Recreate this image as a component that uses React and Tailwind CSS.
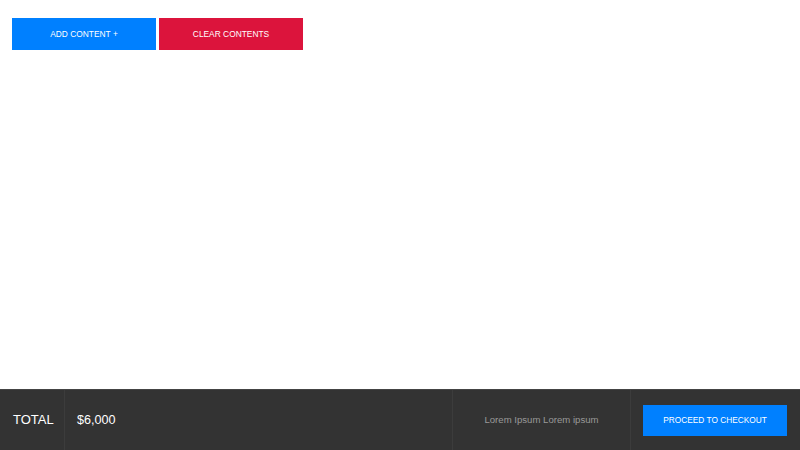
export default function App() {
  return (
    <div className="w-[800px] h-[450px] bg-white flex flex-col" style={{ fontFamily: '"Liberation Sans", Arial, sans-serif' }}>
      <div className="flex-1 pt-[18px] pl-[12px] flex gap-[3px] items-start">
        <button className="w-[144px] h-[32px] pt-[1px] bg-[#0080ff] text-white text-[8.4px] uppercase">ADD CONTENT +</button>
        <button className="w-[144px] h-[32px] pt-[1px] bg-[#dc143c] text-white text-[8.4px] uppercase">CLEAR CONTENTS</button>
      </div>
      <div className="h-[61px] bg-[#333333] border-t border-[#444] flex items-stretch text-white">
        <div className="w-[65px] flex items-center pl-[13px] text-[13px] border-r border-[#3c3c3c]">TOTAL</div>
        <div className="w-[388px] flex items-center pl-[12px] text-[12.6px] border-r border-[#3c3c3c]">$6,000</div>
        <div className="w-[178px] flex items-center justify-center text-[9.6px] text-[#999] border-r border-[#3c3c3c]">Lorem Ipsum Lorem ipsum</div>
        <div className="flex-1 flex items-center pl-[12px]">
          <button className="w-[144px] h-[31px] bg-[#0080ff] text-white text-[8.3px]">PROCEED TO CHECKOUT</button>
        </div>
      </div>
    </div>
  );
}
